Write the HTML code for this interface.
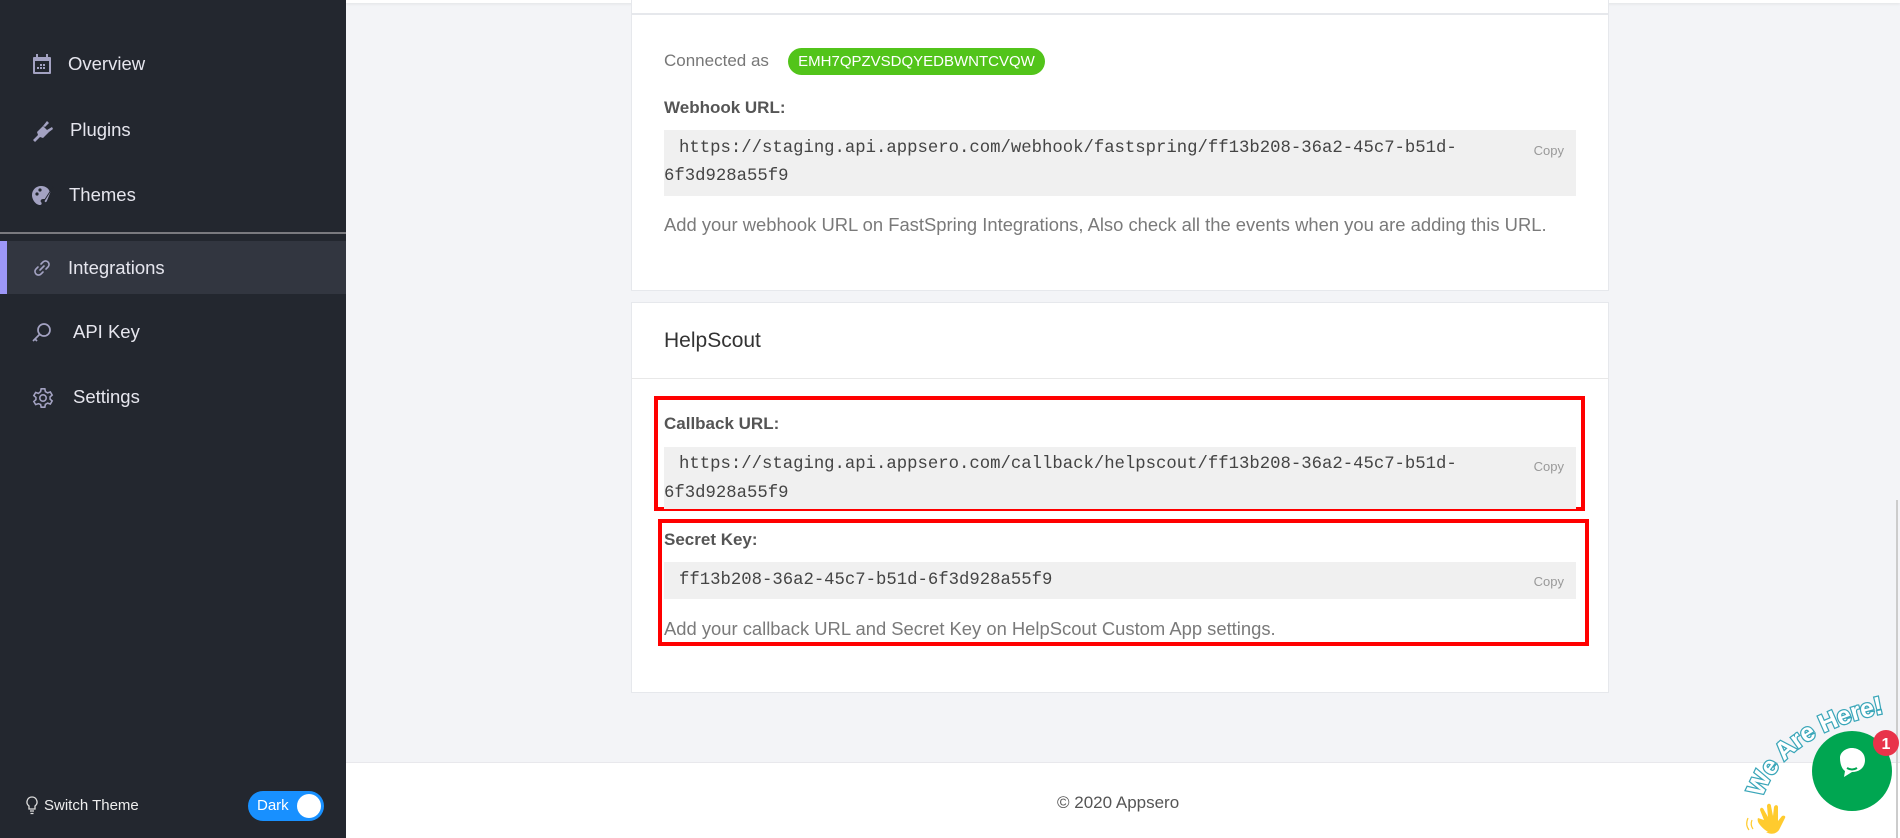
<!DOCTYPE html>
<html><head><meta charset="utf-8"><style>
*{margin:0;padding:0;box-sizing:border-box}
body{width:1900px;height:838px;overflow:hidden;background:#f3f4f7;font-family:"Liberation Sans",sans-serif;position:relative}
.sb{position:absolute;left:0;top:0;width:346px;height:838px;background:#23272f}
.it{position:absolute;left:0;width:346px;height:50px;display:flex;align-items:center;color:#e6e6ee;font-size:18.5px}
.it svg{position:absolute;left:32px;top:15px}
.it span{position:absolute;left:68px}
.act{background:#323640}
.act:before{content:"";position:absolute;left:0;top:0;width:7px;height:100%;background:#9d97f7}
.div{position:absolute;left:0;top:232px;width:346px;height:2px;background:#7a7a7f}
.card{position:absolute;left:631px;width:978px;background:#fff;border:1px solid #e6e8ec}
.lbl{position:absolute;left:664px;font-weight:bold;color:#555;font-size:17px}
.code{position:absolute;left:664px;width:912px;background:#f0f0f0;font-family:"Liberation Mono",monospace;font-size:17.3px;color:#444}
.copy{position:absolute;right:12px;font-size:13px;color:#999;font-family:"Liberation Sans",sans-serif}
.help{position:absolute;left:664px;font-size:18.4px;color:#7a7a7a}
.red{position:absolute;border:4px solid #f00}
</style></head><body>
<div style="position:absolute;left:346px;top:0;width:1554px;height:3px;background:#fff;box-shadow:0 1px 3px rgba(0,0,0,.08)"></div>
<div class="sb">
 <div class="it" style="top:39px"><svg width="20" height="21" viewBox="0 0 20 21"><rect x="1" y="3" width="18" height="17" rx="1" fill="#a3a2c2"/><rect x="4" y="0" width="2" height="4" fill="#a3a2c2"/><rect x="14" y="0" width="2" height="4" fill="#a3a2c2"/><rect x="3" y="7" width="14" height="11" fill="#23272f"/><g fill="#a3a2c2"><rect x="8" y="10" width="2" height="2"/><rect x="11" y="10" width="2" height="2"/><rect x="5" y="13" width="2" height="2"/><rect x="8" y="13" width="2" height="2"/><rect x="11" y="13" width="2" height="2"/></g></svg><span>Overview</span></div>
 <div class="it" style="top:105px"><svg width="22" height="22" viewBox="0 0 22 22"><path d="M1 20l5-5-1-3 6-6 6 6-6 6-3-1-5 5z M11 6l4-5 2 2-4 4z M15 10l5-3 1 2-4 3z" fill="#a3a2c2"/></svg><span style="left:70px">Plugins</span></div>
 <div class="it" style="top:170px"><svg width="22" height="21" viewBox="0 0 22 21"><path d="M9 1C4 1 0 5 0 10s4 10 8 10c2 0 2-2 1-3s0-3 2-3h3c2 0 4-2 4-5C18 4 14 1 9 1z" fill="#a3a2c2"/><circle cx="5" cy="9" r="1.6" fill="#23272f"/><circle cx="8" cy="5" r="1.6" fill="#23272f"/><path d="M21 2L12 16l1 2 2-1z" fill="#a3a2c2" stroke="#23272f" stroke-width="1"/></svg><span style="left:69px">Themes</span></div>
 <div class="div"></div>
 <div class="it act" style="top:241px;height:53px"><svg width="20" height="20" viewBox="0 0 20 20" style="top:17px"><g fill="none" stroke="#a3a2c2" stroke-width="1.6" stroke-linecap="round"><path d="M8 12l4-4"/><path d="M9 6l2-2a3.5 3.5 0 015 5l-2 2"/><path d="M11 14l-2 2a3.5 3.5 0 01-5-5l2-2"/></g></svg><span>Integrations</span></div>
 <div class="it" style="top:307px"><svg width="20" height="20" viewBox="0 0 20 20"><g fill="none" stroke="#a3a2c2" stroke-width="1.7"><circle cx="12" cy="8" r="6"/><path d="M8 12l-7 7M3 17l2 2"/></g></svg><span style="left:73px">API Key</span></div>
 <div class="it" style="top:372px"><svg width="22" height="22" viewBox="0 0 24 24"><g fill="none" stroke="#a3a2c2" stroke-width="1.7"><circle cx="12" cy="12" r="3.5"/><path d="M10 2h4l.6 3 2.4 1.4 3-1 2 3.4-2.3 2v2.4l2.3 2-2 3.4-3-1-2.4 1.4-.6 3h-4l-.6-3L7 18.2l-3 1-2-3.4 2.3-2v-2.4L2 9.4l2-3.4 3 1L9.4 5z"/></g></svg><span style="left:73px">Settings</span></div>
 <svg style="position:absolute;left:26px;top:796px" width="12" height="19" viewBox="0 0 12 19"><g fill="none" stroke="#ddd" stroke-width="1.3"><path d="M6 1a5 5 0 00-3 9v3h6v-3a5 5 0 00-3-9z"/><path d="M4 15h4M4.5 17.5h3"/></g></svg>
 <div style="position:absolute;left:44px;top:797px;color:#eee;font-size:15px">Switch Theme</div>
 <div style="position:absolute;left:248px;top:791px;width:76px;height:30px;border-radius:15px;background:#1890ff"><span style="position:absolute;left:9px;top:6px;color:#fff;font-size:15px">Dark</span><div style="position:absolute;right:3px;top:3px;width:24px;height:24px;border-radius:50%;background:#fff"></div></div>
</div>

<div class="card" style="top:-2px;height:16px"></div>
<div class="card" style="top:14px;height:277px"></div>
<div style="position:absolute;left:664px;top:51px;font-size:17px;color:#777">Connected as</div>
<div style="position:absolute;left:788px;top:48px;width:257px;height:27px;border-radius:14px;background:#52c41a;color:#fff;font-size:15px;text-align:center;line-height:27px">EMH7QPZVSDQYEDBWNTCVQW</div>
<div class="lbl" style="top:98px">Webhook URL:</div>
<div class="code" style="top:130px;height:66px"><div style="position:absolute;left:15px;top:9px">https://staging.api.appsero.com/webhook/fastspring/ff13b208-36a2-45c7-b51d-</div><div style="position:absolute;left:0;top:37px">6f3d928a55f9</div><div class="copy" style="top:13px">Copy</div></div>
<div class="help" style="top:214px">Add your webhook URL on FastSpring Integrations, Also check all the events when you are adding this URL.</div>

<div class="card" style="top:302px;height:391px"></div>
<div style="position:absolute;left:631px;top:378px;width:978px;height:1px;background:#e8e8e8"></div>
<div style="position:absolute;left:664px;top:329px;font-size:21px;color:#333">HelpScout</div>
<div class="red" style="left:654px;top:396px;width:931px;height:115px"></div>
<div class="lbl" style="top:414px">Callback URL:</div>
<div class="code" style="top:447px;height:62px"><div style="position:absolute;left:15px;top:8px">https://staging.api.appsero.com/callback/helpscout/ff13b208-36a2-45c7-b51d-</div><div style="position:absolute;left:0;top:37px">6f3d928a55f9</div><div class="copy" style="top:12px">Copy</div></div>
<div class="red" style="left:658px;top:519px;width:931px;height:127px"></div>
<div class="lbl" style="top:530px">Secret Key:</div>
<div class="code" style="top:562px;height:37px"><div style="position:absolute;left:15px;top:9px">ff13b208-36a2-45c7-b51d-6f3d928a55f9</div><div class="copy" style="top:12px">Copy</div></div>
<div class="help" style="top:618px">Add your callback URL and Secret Key on HelpScout Custom App settings.</div>

<div style="position:absolute;left:346px;top:762px;width:1554px;height:76px;background:#fff;border-top:1px solid #e8e8ec"></div>
<div style="position:absolute;left:1057px;top:793px;font-size:17px;color:#555">© 2020 Appsero</div>
<div style="position:absolute;left:1896px;top:500px;width:2px;height:338px;background:#ccc"></div>

<svg style="position:absolute;left:1740px;top:640px" width="160" height="198" viewBox="0 0 160 198">
 <defs><path id="arc" d="M22 158 Q48 84 175 68"/></defs>
 <text font-family="Liberation Sans,sans-serif" font-weight="bold" font-size="25" fill="#fff" stroke="#3aa6b9" stroke-width="2.5" paint-order="stroke"><textPath href="#arc">We Are Here!</textPath></text>
 <path d="M28 192c-6-4-12-10-10-14l6 2-4-10c0-3 3-3 4 0l4 7-1-11c0-3 4-3 4 0l2 10 1-9c1-3 4-2 4 0l0 14 4-5c2-1 4 0 3 2l-6 12c-3 4-8 5-13 2z" fill="#ffcb2e"/>
 <path d="M12 180q-2 5 1 9M8 178q-3 7 1 12" stroke="#ffcb2e" stroke-width="1.2" fill="none"/>
 <circle cx="112" cy="131" r="40" fill="#00a651"/>
 <path d="M100 118c0-6 6-10 12-10s13 4 13 12c0 8-6 12-13 12l-8 5 1-6c-3-2-5-7-5-13z" fill="#fff"/>
 <path d="M107 128q5 3 10 0" stroke="#00a651" stroke-width="2" fill="none"/>
 <circle cx="146" cy="103" r="13" fill="#e8334a"/>
 <text x="146" y="109" text-anchor="middle" font-family="Liberation Sans,sans-serif" font-weight="bold" font-size="16" fill="#fff">1</text>
</svg>
</body></html>
